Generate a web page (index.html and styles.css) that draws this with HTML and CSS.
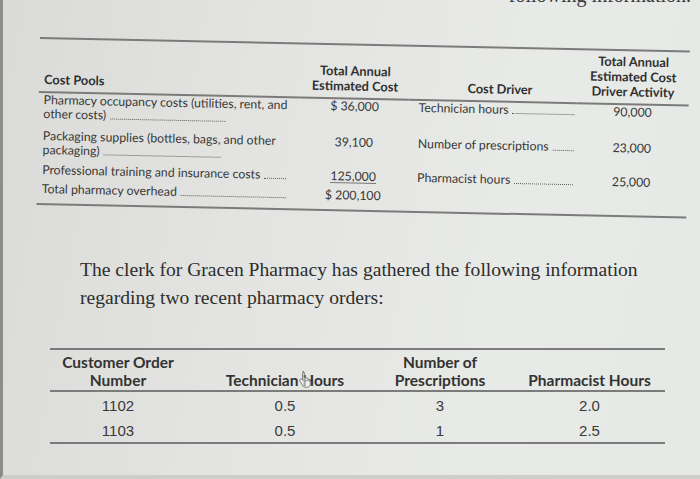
FILE: index.html
```html
<!DOCTYPE html>
<html lang="en">
<head>
<meta charset="utf-8">
<title>Gracen Pharmacy</title>
<link rel="stylesheet" href="styles.css">
</head>
<body>
<div class="page">
  <p class="cut">following information.</p>

  <div class="pools">
    <div class="pools-grid">
      <div class="hd hd-left">Cost Pools</div>
      <div class="hd hd-center">Total Annual<br>Estimated Cost</div>
      <div class="hd hd-center hd-driver">Cost Driver</div>
      <div class="hd hd-center hd-act">Total Annual<br>Estimated Cost<br>Driver Activity</div>

      <div class="row r1">
        <div class="c-pool"><span class="ln">Pharmacy occupancy costs (utilities, rent, and</span><span class="ln lead w-short"><span>other costs)</span><i></i></span></div>
        <div class="c-cost">$ 36,000</div>
        <div class="c-drv"><span class="ln lead w-drv"><span>Technician hours</span><i></i></span></div>
        <div class="c-act">90,000</div>
      </div>

      <div class="row r2">
        <div class="c-pool"><span class="ln">Packaging supplies (bottles, bags, and other</span><span class="ln lead w-short2"><span>packaging)</span><i></i></span></div>
        <div class="c-cost">39,100</div>
        <div class="c-drv"><span class="ln lead w-drv"><span>Number of prescriptions</span><i></i></span></div>
        <div class="c-act">23,000</div>
      </div>

      <div class="row r3">
        <div class="c-pool"><span class="ln lead w-long"><span>Professional training and insurance costs</span><i></i></span></div>
        <div class="c-cost"><span class="under">125,000</span></div>
        <div class="c-drv"><span class="ln lead w-drv"><span>Pharmacist hours</span><i></i></span></div>
        <div class="c-act">25,000</div>
      </div>

      <div class="row r4">
        <div class="c-pool"><span class="ln lead w-long"><span>Total pharmacy overhead</span><i></i></span></div>
        <div class="c-cost">$ 200,100</div>
        <div class="c-drv"></div>
        <div class="c-act"></div>
      </div>
    </div>
  </div>

  <p class="intro">The clerk for Gracen Pharmacy has gathered the following information regarding two recent pharmacy orders:</p>

  <div class="orders">
    <div class="oh">Customer Order<br>Number</div>
    <div class="oh oh-tech">Technician Hours<svg class="cursor" viewBox="0 0 12 17" width="13" height="18" aria-hidden="true"><path d="M4.5 1.5c.8 0 1.3.5 1.3 1.3v4.2l.6-.2c.7-.2 1.3.2 1.4.8l.1.3.4-.2c.7-.2 1.3.2 1.4.8l.1.4.3-.1c.7-.1 1.3.3 1.3 1v3.2c0 1.8-1.2 3.2-3 3.2H6.6c-1 0-1.8-.5-2.3-1.3L1.6 10.2c-.4-.6-.2-1.3.4-1.6.5-.3 1.1-.1 1.5.3l.7.9V2.8c0-.8.5-1.3 1.3-1.3z" fill="rgba(255,255,255,0.55)" stroke="#6a6a6a" stroke-width="0.8" stroke-linejoin="round"/></svg></div>
    <div class="oh">Number of<br>Prescriptions</div>
    <div class="oh oh-ph">Pharmacist Hours</div>

    <div class="orow o1">
      <div class="od">1102</div>
      <div class="od">0.5</div>
      <div class="od">3</div>
      <div class="od od-ph">2.0</div>
    </div>
    <div class="orow o2">
      <div class="od">1103</div>
      <div class="od">0.5</div>
      <div class="od">1</div>
      <div class="od od-ph">2.5</div>
    </div>
  </div>
</div>
</body>
</html>
```

FILE: styles.css
```css
html, body {
  margin: 0;
  padding: 0;
}

body {
  width: 700px;
  height: 479px;
  box-sizing: border-box;
  overflow: hidden;
  background: linear-gradient(100deg, #dadbd8 0%, #e3e4e1 35%, #e8eae7 70%, #e5e9e6 100%);
  border-left: 3px solid #8c8c8a;
  border-bottom: 4px solid #cdcecb;
  color: #333;
}

.page {
  display: flex;
  flex-direction: column;
}

.cut {
  margin: -16px 9px 0 0;
  font-family: "Liberation Serif", serif;
  font-size: 20px;
  line-height: 22px;
  text-align: right;
  color: #3a3a3a;
  white-space: nowrap;
}

/* ---------- cost pools table ---------- */
.pools {
  margin: 31px 0 0 37px;
  width: 650px;
  border-top: 2px solid #7b7b7b;
  transform: rotate(1.2deg);
  transform-origin: 0 0;
}

.pools-grid {
  display: grid;
  grid-template-columns: 262px 108px 168px 112px;
  font-family: Lato, "Open Sans", sans-serif;
  font-size: 12.3px;
  line-height: 14px;
  color: #383838;
  border-bottom: 2px solid #7b7b7b;
  padding-bottom: 7px;
}

.hd {
  align-self: stretch;
  display: flex;
  flex-direction: column;
  justify-content: flex-end;
  font-weight: 700;
  font-size: 12.8px;
  line-height: 15px;
  color: #303030;
  padding-bottom: 4px;
  border-bottom: 2px solid #7b7b7b;
}

.hd-left {
  padding-left: 5px;
}

.hd-center {
  text-align: center;
}

.hd-driver {
  padding-left: 14px;
}

.hd-act {
  padding-top: 3px;
}

.row {
  display: contents;
}

.row > div {
  padding-top: 0;
}

.r2 > div {
  padding-top: 8px;
}

.r3 > div {
  padding-top: 6px;
}

.r4 > div {
  padding-top: 5px;
}

.c-pool {
  display: flex;
  flex-direction: column;
  padding-left: 5px;
}

.ln {
  display: block;
  white-space: nowrap;
}

.lead {
  display: flex;
  align-items: flex-end;
}

.lead > span {
  flex: none;
}

.lead > i {
  flex: 1;
  height: 0;
  margin: 0 0 3px 4px;
  border-bottom: 1px dotted #5e5e5e;
}

.w-short {
  width: 182px;
}

.w-short2 {
  width: 178px;
}

.w-long {
  width: 244px;
}

.w-drv {
  width: 156px;
}

.c-cost {
  text-align: center;
}

.under {
  display: inline-block;
  border-bottom: 1px solid #777;
  line-height: 13px;
}

.c-drv {
  padding-left: 10px;
}

.c-act {
  text-align: center;
}

/* ---------- intro paragraph ---------- */
.intro {
  margin: 51px 0 0 77px;
  width: 600px;
  font-family: "Liberation Serif", serif;
  font-size: 19.6px;
  line-height: 28px;
  color: #2e2e2e;
}

/* ---------- orders table ---------- */
.orders {
  margin: 36px 0 0 47px;
  width: 615px;
  display: grid;
  grid-template-columns: 136px 198px 112px 169px;
  border-top: 2px solid #7b7b7b;
  border-bottom: 2px solid #7b7b7b;
  padding-bottom: 1px;
  font-family: Lato, "Open Sans", sans-serif;
  color: #333;
}

.oh {
  position: relative;
  display: flex;
  flex-direction: column;
  justify-content: flex-end;
  text-align: center;
  font-weight: 700;
  font-size: 15.5px;
  line-height: 18px;
  padding: 3px 0 1px;
  border-bottom: 2px solid #7b7b7b;
}

.oh-ph {
  padding-left: 18px;
}

.cursor {
  position: absolute;
  left: 112px;
  top: 20px;
}

.orow {
  display: contents;
}

.od {
  text-align: center;
  font-family: "Liberation Sans", Arial, sans-serif;
  font-size: 15px;
  line-height: 20px;
  color: #3a3a3a;
}

.o1 > .od {
  padding-top: 4px;
}

.o2 > .od {
  padding-top: 5px;
}

.od-ph {
  padding-left: 18px;
}
```
